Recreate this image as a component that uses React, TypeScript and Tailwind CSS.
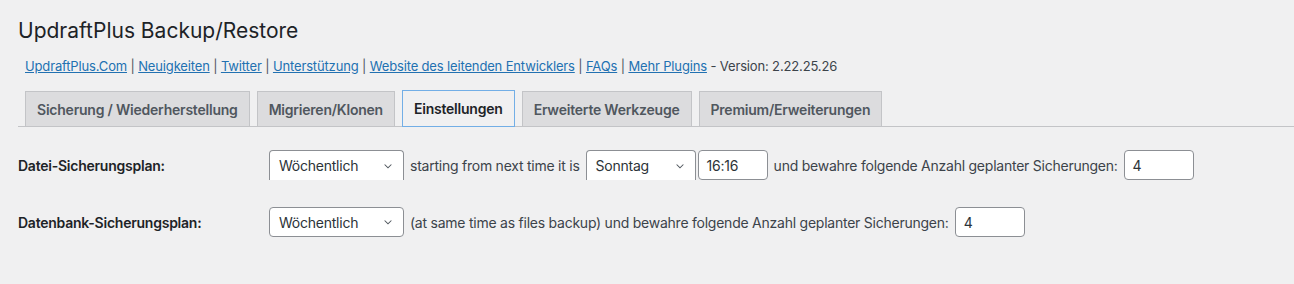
function Chevron() {
  return (
    <svg width="12" height="12" viewBox="0 0 16 16" fill="none" className="absolute right-[9px] top-1/2 -translate-y-1/2">
      <path d="M3.5 6l4.5 4.5L12.5 6" stroke="#50575e" strokeWidth="1.4" />
    </svg>
  );
}

function Select({ value, width, cut }: { value: string; width: string; cut?: boolean }) {
  return (
    <div
      className={`relative h-[30px] ${width} bg-white border border-[#8c8f94] rounded-[4px] pl-[9px] flex items-center text-[14px] text-[#2c3338] ${cut ? "border-b-0 rounded-b-none" : ""}`}
    >
      {value}
      <Chevron />
    </div>
  );
}

function Input({ value, width }: { value: string; width: string }) {
  return (
    <div className={`h-[30px] ${width} bg-white border border-[#8c8f94] rounded-[4px] px-[8px] flex items-center text-[14px] text-[#2c3338]`}>
      {value}
    </div>
  );
}

const links = [
  "UpdraftPlus.Com",
  "Neuigkeiten",
  "Twitter",
  "Unterstützung",
  "Website des leitenden Entwicklers",
  "FAQs",
  "Mehr Plugins",
];

const tabs = [
  "Sicherung / Wiederherstellung",
  "Migrieren/Klonen",
  "Einstellungen",
  "Erweiterte Werkzeuge",
  "Premium/Erweiterungen",
];

export default function App() {
  return (
    <div className="min-h-[284px] bg-[#f0f0f1] font-['Inter',sans-serif] text-[#3c434a] pl-[18px] pt-[16px]">
      {/* Header */}
      <h1 className="text-[21px] leading-[29px] text-[#1d2327]">UpdraftPlus Backup/Restore</h1>

      <p className="mt-[12px] pl-[7px] text-[13px] leading-[18px] tracking-[-0.15px]">
        {links.map((l, i) => (
          <span key={l}>
            <a className="text-[#2271b1] underline">{l}</a>
            {i < links.length - 1 ? <span className="text-[#50575e]"> | </span> : null}
          </span>
        ))}
        <span> - Version: 2.22.25.26</span>
      </p>

      {/* Tabs */}
      <div className="mt-[15px] flex items-end gap-[7px] pl-[7px] border-b border-[#c3c4c7] tracking-[-0.22px]">
        {tabs.map((t) =>
          t === "Einstellungen" ? (
            <div
              key={t}
              className="h-[37px] -mb-px px-[11px] flex items-center text-[14px] font-semibold text-[#1d2327] bg-[#f0f0f1] border border-[#72aee6]"
            >
              {t}
            </div>
          ) : (
            <div
              key={t}
              className="h-[35px] px-[11px] flex items-center text-[14px] font-semibold text-[#50575e] bg-[#dcdcde] border border-b-0 border-[#c3c4c7]"
            >
              {t}
            </div>
          )
        )}
      </div>

      {/* Settings */}
      <div className="mt-[23px] flex items-center text-[14px] tracking-[-0.24px]">
        <div className="w-[251px] font-semibold text-[#1d2327]">Datei-Sicherungsplan:</div>
        <Select value="Wöchentlich" width="w-[135px]" cut />
        <span className="mx-[6px]">starting from next time it is</span>
        <Select value="Sonntag" width="w-[110px]" cut />
        <div className="ml-[2px]">
          <Input value="16:16" width="w-[70px]" />
        </div>
        <span className="mx-[6px]">und bewahre folgende Anzahl geplanter Sicherungen:</span>
        <Input value="4" width="w-[70px]" />
      </div>

      <div className="mt-[27px] flex items-center text-[14px] tracking-[-0.24px]">
        <div className="w-[251px] font-semibold text-[#1d2327]">Datenbank-Sicherungsplan:</div>
        <Select value="Wöchentlich" width="w-[135px]" />
        <span className="mx-[6px]">(at same time as files backup) und bewahre folgende Anzahl geplanter Sicherungen:</span>
        <Input value="4" width="w-[70px]" />
      </div>
    </div>
  );
}
